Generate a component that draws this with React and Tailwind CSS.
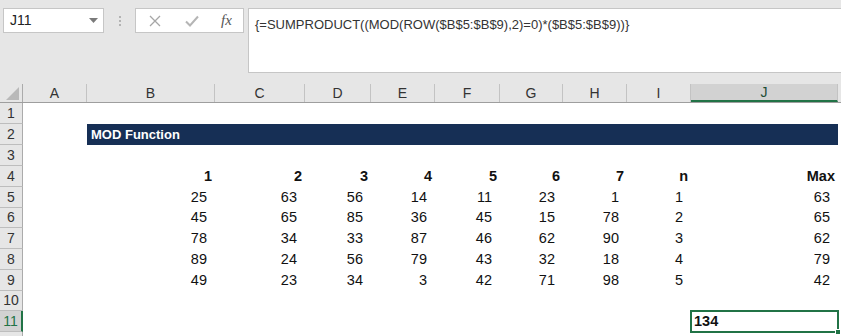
import React from 'react';

const cols = [
  { key: 'A', w: 'w-[64px]' },
  { key: 'B', w: 'w-[128px]' },
  { key: 'C', w: 'w-[90px]' },
  { key: 'D', w: 'w-[66px]' },
  { key: 'E', w: 'w-[64px]' },
  { key: 'F', w: 'w-[65px]' },
  { key: 'G', w: 'w-[63px]' },
  { key: 'H', w: 'w-[64px]' },
  { key: 'I', w: 'w-[64px]' },
  { key: 'J', w: 'w-[147px]' },
];

const rowHeights = [
  'h-[21px]', 'h-[21px]', 'h-[21px]', 'h-[21px]', 'h-[21px]', 'h-[20px]',
  'h-[21px]', 'h-[21px]', 'h-[21px]', 'h-[20px]', 'h-[21px]', 'h-[21px]',
];

// row 4 headers, rows 5-9 values (A is empty)
const headerRow = ['', '1', '2', '3', '4', '5', '6', '7', 'n', 'Max'];
const data = [
  ['', '25', '63', '56', '14', '11', '23', '1', '1', '63'],
  ['', '45', '65', '85', '36', '45', '15', '78', '2', '65'],
  ['', '78', '34', '33', '87', '46', '62', '90', '3', '62'],
  ['', '89', '24', '56', '79', '43', '32', '18', '4', '79'],
  ['', '49', '23', '34', '3', '42', '71', '98', '5', '42'],
];

function RowHead({ n, h, selected }) {
  return (
    <div
      className={
        'w-[23px] shrink-0 flex items-center justify-center border-b border-[#bdbdbd] text-[14px] ' +
        h +
        (selected
          ? ' bg-[#d2d2d2] text-[#217346] border-r-2 border-r-[#217346]'
          : ' bg-[#e6e6e6] text-[#333] border-r border-r-[#ababab]')
      }
    >
      {n}
    </div>
  );
}

function FormulaBar() {
  return (
    <div className="flex items-start pt-[8px] pl-[3px] h-[84px]">
      <div className="w-[101px] h-[25px] bg-white border border-[#c6c6c6] flex items-center justify-between pl-[6px] pr-[5px]">
        <span className="text-[14px] text-[#222]">J11</span>
        <svg width="9" height="5" viewBox="0 0 9 5">
          <polygon points="0,0 9,0 4.5,5" fill="#7a7a7a" />
        </svg>
      </div>
      <div className="w-[31px] h-[25px] flex flex-col items-center justify-center gap-[2px]">
        <span className="w-[2px] h-[2px] bg-[#b3b3b3]" />
        <span className="w-[2px] h-[2px] bg-[#b3b3b3]" />
        <span className="w-[2px] h-[2px] bg-[#b3b3b3]" />
      </div>
      <div className="w-[109px] h-[25px] bg-white border border-[#c6c6c6] flex items-center">
        <div className="w-[37px] flex justify-center pl-[1px]">
          <svg width="12" height="12" viewBox="0 0 12 12">
            <path d="M1 1 L11 11 M11 1 L1 11" stroke="#a6a6a6" strokeWidth="1.3" fill="none" />
          </svg>
        </div>
        <div className="w-[37px] flex justify-center">
          <svg width="14" height="12" viewBox="0 0 14 12">
            <path d="M1 6.5 L5 10.5 L13 1.5" stroke="#b5b5b5" strokeWidth="2" fill="none" />
          </svg>
        </div>
        <div className="w-[33px] flex justify-center">
          <span className="font-['Liberation_Serif'] italic text-[15px] text-[#555] leading-none">fx</span>
        </div>
      </div>
      <div className="ml-[4px] flex-1 h-[65px] bg-white border border-r-0 border-[#c6c6c6] pl-[6px] pt-[3px]">
        <span className="text-[13px] text-[#333]">
          {'{=SUMPRODUCT((MOD(ROW($B$5:$B$9),2)=0)*($B$5:$B$9))}'}
        </span>
      </div>
    </div>
  );
}

function ColumnHeaders() {
  return (
    <div className="flex h-[19px] border-b border-[#9e9e9e]">
      <div className="w-[23px] shrink-0 relative border-r border-[#ababab] bg-[#e6e6e6]">
        <svg className="absolute right-[3px] bottom-[2px]" width="13" height="13" viewBox="0 0 13 13">
          <polygon points="13,0 13,13 0,13" fill="#b9b9b9" />
        </svg>
      </div>
      {cols.map((c) => (
        <div
          key={c.key}
          className={
            c.w +
            ' shrink-0 flex items-center justify-center text-[14px] border-r border-r-[#c3c3c3] ' +
            (c.key === 'J'
              ? 'bg-[#d2d2d2] text-[#1e4e36] border-b-2 border-b-[#217346]'
              : 'bg-[#e6e6e6] text-[#333]')
          }
        >
          {c.key}
        </div>
      ))}
      <div className="flex-1 bg-[#e6e6e6]" />
    </div>
  );
}

function ValueRow({ n, h, values, bold }) {
  return (
    <div className="flex">
      <RowHead n={n} h={h} />
      {cols.map((c, i) => (
        <div
          key={c.key}
          className={
            c.w +
            ' shrink-0 flex items-center justify-end text-[14.5px] text-[#111] ' +
            h +
            (bold ? ' font-bold pr-[3px]' : ' pr-[8px]')
          }
        >
          {values[i]}
        </div>
      ))}
      <div className="flex-1 bg-white" />
    </div>
  );
}

function EmptyRow({ n, h }) {
  return (
    <div className="flex">
      <RowHead n={n} h={h} />
      <div className={'flex-1 bg-white ' + h} />
    </div>
  );
}

export default function App() {
  return (
    <div className="w-[841px] h-[336px] overflow-hidden bg-[#e6e6e6] font-['Liberation_Sans',sans-serif]">
      <FormulaBar />
      <ColumnHeaders />
      <div className="bg-white">
        <EmptyRow n="1" h={rowHeights[0]} />
        <div className="flex">
          <RowHead n="2" h={rowHeights[1]} />
          <div className="w-[64px] shrink-0" />
          <div className="w-[751px] shrink-0 bg-[#162f55] flex items-center pl-[4px]">
            <span className="text-white font-bold text-[13px]">MOD Function</span>
          </div>
          <div className="flex-1" />
        </div>
        <EmptyRow n="3" h={rowHeights[2]} />
        <ValueRow n="4" h={rowHeights[3]} values={headerRow} bold />
        {data.map((r, i) => (
          <ValueRow key={i} n={String(i + 5)} h={rowHeights[i + 4]} values={r} />
        ))}
        <EmptyRow n="10" h={rowHeights[9]} />
        <div className="flex">
          <RowHead n="11" h={rowHeights[10]} selected />
          <div className="w-[668px] shrink-0" />
          <div className={'w-[147px] shrink-0 relative flex items-center pl-[3px] ' + rowHeights[10]}>
            <div className="absolute -inset-[1px] border-2 border-[#217346]" />
            <span className="font-bold text-[14.5px] text-[#111]">134</span>
            <div className="absolute -right-[3px] -bottom-[3px] w-[6px] h-[6px] bg-[#217346] border border-white" />
          </div>
          <div className="flex-1" />
        </div>
        <EmptyRow n="" h={rowHeights[11]} />
      </div>
    </div>
  );
}
